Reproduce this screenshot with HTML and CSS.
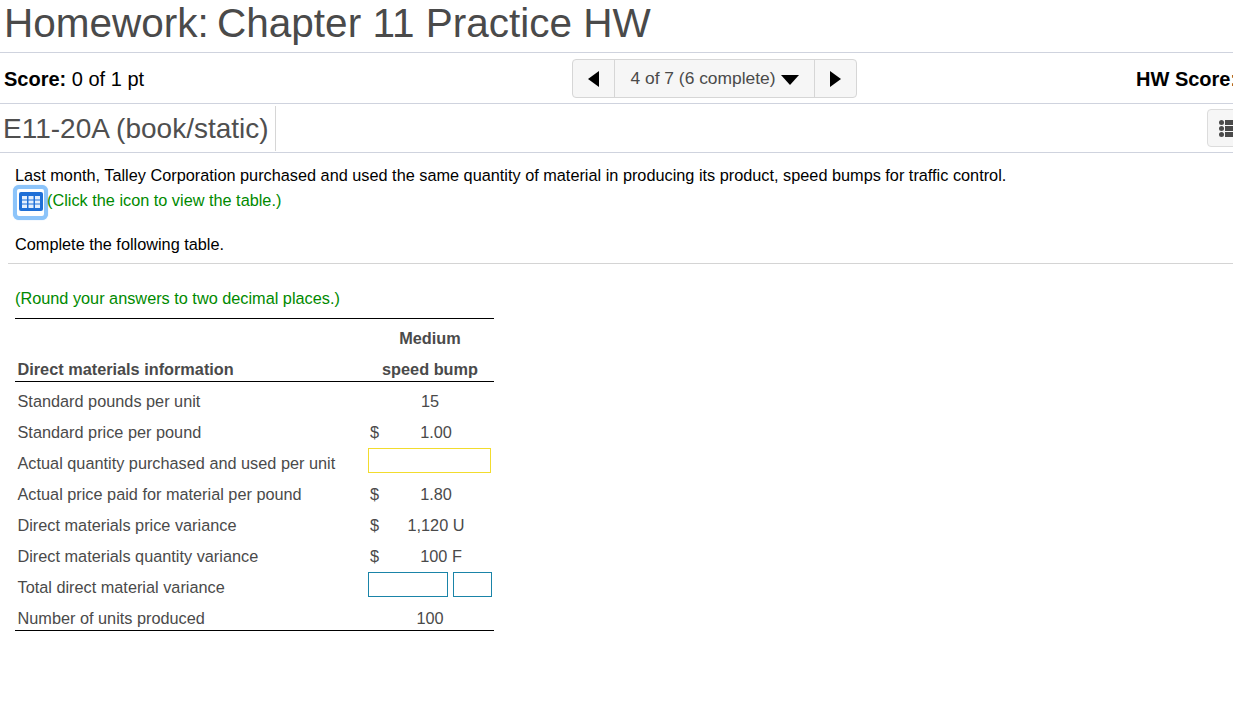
FILE: index.html
```html
<!DOCTYPE html>
<html lang="en">
<head>
<meta charset="utf-8">
<title>Homework: Chapter 11 Practice HW</title>
<link rel="stylesheet" href="styles.css">
</head>
<body>
<header class="title-bar"><h1><span class="title-lead">Homework:</span> Chapter 11 Practice HW</h1></header>
<section class="score-bar">
  <div class="score"><b>Score:</b> 0 of 1 pt</div>
  <nav class="pager">
    <span class="pager-btn pager-side"><svg width="11" height="16" viewBox="0 0 11 16"><path d="M11 0V16L0 8Z"/></svg></span>
    <span class="pager-btn pager-mid">4 of 7 (6 complete)<svg width="18" height="10" viewBox="0 0 18 10"><path d="M0 0H18L9 10Z"/></svg></span>
    <span class="pager-btn pager-side"><svg width="11" height="16" viewBox="0 0 11 16"><path d="M0 0V16L11 8Z"/></svg></span>
  </nav>
  <div class="hw-score"><b>HW Score:</b></div>
</section>
<section class="question-bar">
  <h2>E11-20A (book/static)</h2>
  <span class="list-btn"><svg width="18" height="17" viewBox="0 0 18 17"><circle cx="2.500" cy="2.500" r="2.500"/><circle cx="2.500" cy="8.500" r="2.500"/><circle cx="2.500" cy="14.500" r="2.500"/><rect x="6" y="0" width="12" height="5"/><rect x="6" y="6" width="12" height="5"/><rect x="6" y="12" width="12" height="5"/></svg></span>
</section>
<main class="content">
  <p class="intro">Last month, Talley Corporation purchased and used the same quantity of material in producing its product, speed bumps for traffic control.</p>
  <p class="hint-line"><span class="table-icon"><svg width="24" height="19" viewBox="0 0 24 19"><rect width="24" height="19" rx="2" fill="#1f6fd6"/><g fill="#e4effd"><rect x="3" y="4" width="5" height="3.500"/><rect x="9.500" y="4" width="5" height="3.500"/><rect x="16" y="4" width="5" height="3.500"/><rect x="3" y="8.500" width="5" height="3"/><rect x="9.500" y="8.500" width="5" height="3"/><rect x="16" y="8.500" width="5" height="3"/><rect x="3" y="12.500" width="5" height="3.500"/><rect x="9.500" y="12.500" width="5" height="3.500"/><rect x="16" y="12.500" width="5" height="3.500"/></g></svg></span><span class="green hint-text">(Click the icon to view the table.)</span></p>
  <p class="instruction">Complete the following table.</p>
  <hr class="divider">
  <p class="green round">(Round your answers to two decimal places.)</p>
  <table class="data">
    <colgroup><col class="col-label"><col class="col-cur"><col class="col-val"></colgroup>
    <thead>
      <tr class="head-top"><th></th><th colspan="2" class="center">Medium</th></tr>
      <tr class="head-bottom"><th class="label">Direct materials information</th><th colspan="2" class="center">speed bump</th></tr>
    </thead>
    <tbody>
      <tr><td class="label">Standard pounds per unit</td><td colspan="2" class="center">15</td></tr>
      <tr><td class="label">Standard price per pound</td><td class="cur">$</td><td class="val">1.00</td></tr>
      <tr><td class="label">Actual quantity purchased and used per unit</td><td colspan="2" class="inputs"><span class="box box-yellow"></span></td></tr>
      <tr><td class="label">Actual price paid for material per pound</td><td class="cur">$</td><td class="val">1.80</td></tr>
      <tr><td class="label">Direct materials price variance</td><td class="cur">$</td><td class="val">1,120 U</td></tr>
      <tr><td class="label">Direct materials quantity variance</td><td class="cur">$</td><td class="val val-flag">100 F</td></tr>
      <tr><td class="label">Total direct material variance</td><td colspan="2" class="inputs"><span class="box box-blue box-amount"></span><span class="box box-blue box-flag"></span></td></tr>
      <tr class="last"><td class="label">Number of units produced</td><td colspan="2" class="center">100</td></tr>
    </tbody>
  </table>
</main>
</body>
</html>
```
FILE: styles.css
```css
* { box-sizing: border-box; }
html, body { margin: 0; padding: 0; height: 708px; overflow: hidden; background: #fff; }
body { font-family: "Liberation Sans", Arial, sans-serif; color: #000; width: 1233px; }
.title-bar { height: 53px; border-bottom: 1px solid #cfd3de; padding-left: 4px; }
h1 { margin: 0; font-size: 40.5px; font-weight: 400; line-height: 46px; color: #4a4a4a; white-space: nowrap; }
.title-lead { margin-right: -3px; }
.score-bar { height: 51px; border-bottom: 1px solid #cfd3de; display: flex; align-items: center; padding: 2px 0 0 4px; font-size: 20px; overflow: hidden; white-space: nowrap; }
.score { width: 568px; flex: none; }
.pager { width: 285px; height: 39px; flex: none; display: flex; background: #f6f6f6; border: 1px solid #d6d6d6; border-radius: 4px; margin-top: -1px; }
.pager-btn { display: flex; align-items: center; justify-content: center; }
.pager-side { width: 41px; flex: none; }
.pager-side svg { fill: #000; }
.pager-mid { flex: 1; gap: 5px; border-left: 1px solid #d6d6d6; border-right: 1px solid #d6d6d6; font-size: 17.4px; color: #4a4a4a; }
.pager-mid svg { fill: #000; margin-top: 3px; }
.hw-score { margin-left: 279px; flex: none; }
.question-bar { height: 49px; border-bottom: 1px solid #cfd3de; display: flex; align-items: center; justify-content: space-between; }
h2 { margin: 0; height: 45px; padding: 0 6px 0 3px; font-size: 28px; font-weight: 400; line-height: 46px; color: #4f4f4f; border-right: 1px solid #d6d6d6; white-space: nowrap; }
.list-btn { width: 40px; height: 38px; margin-right: -14px; display: flex; align-items: center; padding-left: 11px; background: #f6f6f6; border: 1px solid #dcdcdc; border-radius: 4px; fill: #4a4a4a; }
.list-btn svg { flex: none; }
.content { padding-left: 8px; font-size: 16.3px; }
p { margin: 0; }
.intro { padding: 14px 0 0 7px; line-height: 17px; white-space: nowrap; }
.hint-line { display: flex; align-items: flex-start; height: 36px; padding-left: 5px; white-space: nowrap; }
.table-icon { width: 35px; height: 35px; margin: 1px -1px 0 0; display: flex; align-items: center; justify-content: center; background: #fff; border: 4px solid #8cc4fa; border-radius: 6px; box-shadow: 0 0 1px #8cc4fa; flex: none; }
.table-icon svg { margin-bottom: 2px; }
.hint-text { margin-top: 7px; }
.green { color: #008a00; }
.instruction { padding-left: 7px; margin-top: 16px; line-height: 17px; }
.divider { margin: 10px 0 0; border: 0; border-top: 1px solid #d4d4d4; }
.round { padding-left: 7px; margin-top: 26px; line-height: 17px; }
.data { margin: 11px 0 0 7px; width: 479px; border-collapse: collapse; table-layout: fixed; border-top: 1px solid #000; border-bottom: 1px solid #000; font-size: 16.3px; color: #4a4a4a; }
.col-label { width: 353px; }
.col-cur { width: 20px; }
.col-val { width: 106px; }
.data th, .data td { padding: 9px 0 0; height: 31px; font-weight: 400; white-space: nowrap; }
.data th { font-weight: 700; }
.head-bottom th { height: 32px; border-bottom: 1px solid #000; }
.last td { height: 32px; padding-bottom: 1px; }
.data .label { text-align: left; padding-left: 2.500px; }
.data .center { text-align: center; padding-right: 2px; }
.data .cur { text-align: left; padding-left: 2px; }
.data .val { text-align: center; padding-right: 10px; }
.data .val-flag { padding-right: 0; }
.data .inputs { font-size: 0; padding: 4px 0 0 0; vertical-align: top; }
.box { display: inline-block; height: 25px; vertical-align: top; }
.box-yellow { width: 123px; border: 1px solid #f2dc2e; }
.box-blue { border: 1px solid #1a84a8; }
.box-amount { width: 80px; }
.box-flag { width: 39px; margin-left: 5px; }
```
